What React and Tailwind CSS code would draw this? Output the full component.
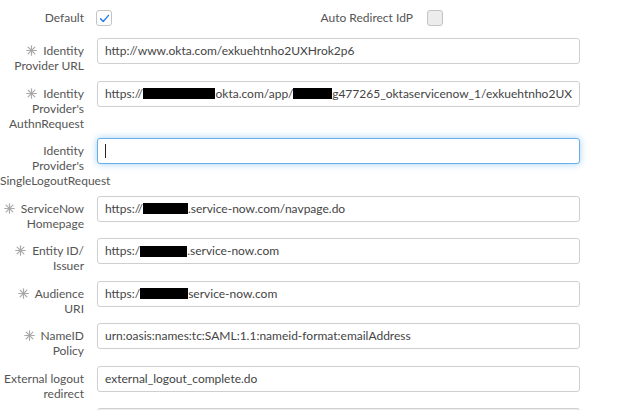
import React from "react";

const font = { fontFamily: "Lato, 'Open Sans', sans-serif" };

function Star() {
  return (
    <svg width="11" height="11" viewBox="0 0 12 12" className="inline-block mr-[6px] align-top mt-[2px]">
      <g stroke="#a9a9a9" strokeWidth="1.3" strokeLinecap="round">
        <line x1="6" y1="0.8" x2="6" y2="11.2" />
        <line x1="0.8" y1="6" x2="11.2" y2="6" />
        <line x1="2.3" y1="2.3" x2="9.7" y2="9.7" />
        <line x1="9.7" y1="2.3" x2="2.3" y2="9.7" />
      </g>
    </svg>
  );
}

function Redact({ w }) {
  return <span className="inline-block h-[11px] bg-black align-[-1px]" style={{ width: w }} />;
}

function Field({ label, required, children, focused, wide }) {
  return (
    <div className="flex items-start mb-[7.5px]">
      <div className="w-[84px] shrink-0 pt-[5px] text-right text-[12px] leading-[15px] text-[#555] whitespace-nowrap">
        {label.map((l, i) => (
          <div key={i} className={wide && i === label.length - 1 ? "-mr-[18px]" : ""}>
            {i === 0 && required && <Star />}
            {l}
          </div>
        ))}
      </div>
      <div
        className={`ml-[13px] w-[483px] h-[26px] shrink-0 rounded-[3px] bg-white px-[7px] flex items-center text-[12px] text-[#444] whitespace-nowrap overflow-hidden ${
          focused
            ? "border border-[#66afe9] shadow-[0_0_7px_rgba(102,175,233,0.6)]"
            : "border border-[#cfcfcf]"
        }`}
      >
        {children}
      </div>
    </div>
  );
}

export default function App() {
  return (
    <div className="w-[624px] h-[410px] bg-white overflow-hidden" style={font}>
      <div className="flex items-center pt-[10px] mb-[12px] h-[26px]">
        <div className="w-[316px] flex items-center">
          <span className="w-[84px] text-right text-[12px] text-[#555]">Default</span>
          <span className="ml-[12px] w-[16px] h-[16px] rounded-[3px] border border-[#c4c4c4] bg-white flex items-center justify-center">
            <svg width="11" height="11" viewBox="0 0 12 12">
              <path d="M1.8 6.4 L4.6 9.2 L10.4 2.6" fill="none" stroke="#2f7ff0" strokeWidth="1.6" strokeLinecap="round" strokeLinejoin="round" />
            </svg>
          </span>
        </div>
        <span className="w-[97px] text-right text-[12px] text-[#555] whitespace-nowrap">Auto Redirect IdP</span>
        <span className="ml-[14px] w-[16px] h-[16px] rounded-[3px] border border-[#c4c4c4] bg-[#ececec]" />
      </div>

      <Field label={["Identity", "Provider URL"]} required>
        http://www.okta.com/exkuehtnho2UXHrok2p6
      </Field>
      <Field label={["Identity", "Provider's", "AuthnRequest"]} required>
        https://<Redact w={105} />okta.com/app/<Redact w={56} />g477265_oktaservicenow_1/exkuehtnho2UX
      </Field>
      <Field label={["Identity", "Provider's", "SingleLogoutRequest"]} focused wide>
        <span className="inline-block w-[1px] h-[14px] bg-[#222]" />
      </Field>
      <Field label={["ServiceNow", "Homepage"]} required>
        https://<Redact w={45} />.service-now.com/navpage.do
      </Field>
      <Field label={["Entity ID/", "Issuer"]} required>
        https:/<Redact w={47} />.service-now.com
      </Field>
      <Field label={["Audience", "URI"]} required>
        https:/<Redact w={48} />service-now.com
      </Field>
      <Field label={["NameID", "Policy"]} required>
        urn:oasis:names:tc:SAML:1.1:nameid-format:emailAddress
      </Field>
      <Field label={["External logout", "redirect"]}>
        external_logout_complete.do
      </Field>
      <div className="flex">
        <div className="w-[84px] shrink-0" />
        <div className="ml-[13px] w-[483px] h-[26px] rounded-[3px] border border-[#cfcfcf] bg-[#eeeeee]" />
      </div>
    </div>
  );
}
